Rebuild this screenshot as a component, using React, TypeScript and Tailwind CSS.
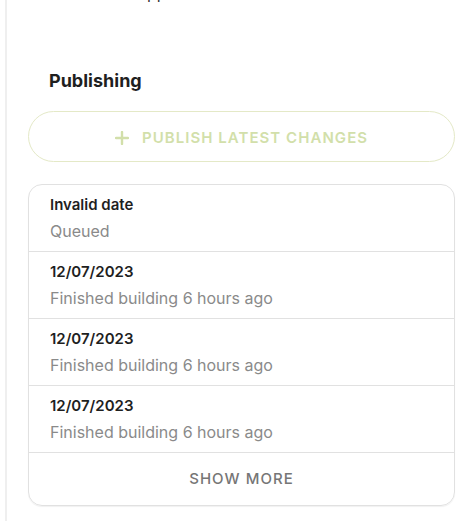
import React from "react";

interface Build {
  date: string;
  status: string;
}

const builds: Build[] = [
  { date: "Invalid date", status: "Queued" },
  { date: "12/07/2023", status: "Finished building 6 hours ago" },
  { date: "12/07/2023", status: "Finished building 6 hours ago" },
  { date: "12/07/2023", status: "Finished building 6 hours ago" },
];

const App: React.FC = () => {
  return (
    <div className="w-[474px] h-[521px] bg-white overflow-hidden font-['Inter',sans-serif]">
      <div className="ml-[5px] h-full border-l-2 border-[#efefef] pl-[21px] pr-[19px]">
        {/* tail of the line above, cut off at the top */}
        <div className="h-[3px] overflow-hidden flex flex-col justify-end pl-[110px]">
          <p className="text-[16px] leading-[20px] text-[#333] whitespace-nowrap">app</p>
        </div>

        <h2 className="mt-[66px] pl-[21px] text-[18px] leading-[24px] font-bold text-[#1f1f1f]">Publishing</h2>

        <button
          type="button"
          className="mt-[18px] w-full h-[51px] pt-[3px] rounded-full border-[1.5px] border-[#e4e9c7] flex items-center justify-center gap-[13px] text-[#d2dfaa]"
        >
          <svg width="14" height="14" viewBox="0 0 14 14" fill="none">
            <path d="M7 1v12M1 7h12" stroke="currentColor" strokeWidth="2.4" strokeLinecap="round" />
          </svg>
          <span className="text-[15px] font-semibold tracking-[0.07em] uppercase">Publish latest changes</span>
        </button>

        <div className="mt-[22px] rounded-[14px] border border-[#e1e1e1] shadow-[0_1px_1px_rgba(0,0,0,0.06)] overflow-hidden">
          {builds.map((b, i) => (
            <div key={i} className="h-[67px] px-[21px] pt-[2px] flex flex-col justify-center border-b border-[#e1e1e1]">
              <div className="text-[15px] leading-[24px] font-semibold text-[#1f1f1f]">{b.date}</div>
              <div className="text-[16px] leading-[28px] text-[#8a8a8a]">{b.status}</div>
            </div>
          ))}
          <div className="h-[52px] flex items-center justify-center text-[15px] font-medium tracking-[0.07em] text-[#767676] uppercase">
            Show more
          </div>
        </div>
      </div>
    </div>
  );
};

export default App;
